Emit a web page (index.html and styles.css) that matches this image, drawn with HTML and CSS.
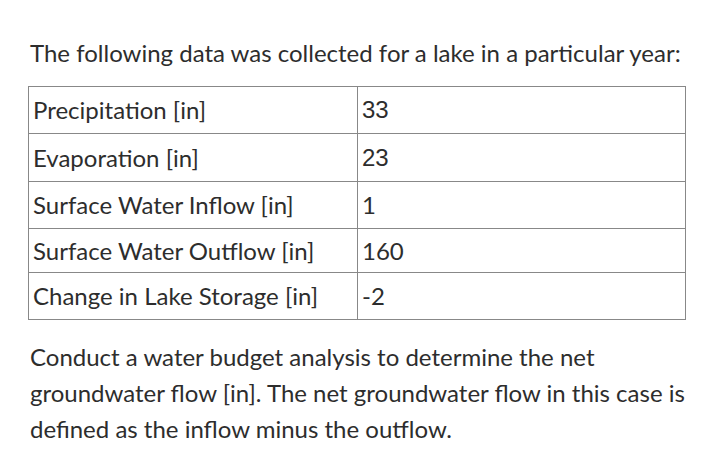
FILE: index.html
```html
<!DOCTYPE html>
<html>
<head>
<meta charset="utf-8">
<link rel="stylesheet" href="styles.css">
</head>
<body>
<div class="page">
  <p class="intro">The following data was collected for a lake in a particular year:</p>
  <table class="data">
    <tr class="r47"><td class="label">Precipitation [in]</td><td class="val arial">33</td></tr>
    <tr class="r48"><td class="label">Evaporation [in]</td><td class="val arial">23</td></tr>
    <tr class="r47"><td class="label">Surface Water Inflow [in]</td><td class="val">1</td></tr>
    <tr class="r44"><td class="label">Surface Water Outflow [in]</td><td class="val">160</td></tr>
    <tr class="r47"><td class="label">Change in Lake Storage [in]</td><td class="val">-2</td></tr>
  </table>
  <p class="question">Conduct a water budget analysis to determine the net groundwater flow [in]. The net groundwater flow in this case is defined as the inflow minus the outflow.</p>
</div>
</body>
</html>
```
FILE: styles.css
```css
html, body {
  margin: 0;
  padding: 0;
  background: #ffffff;
}
body {
  font-family: "Lato", "Liberation Sans", sans-serif;
  color: #2d2d2d;
}
.page {
  padding: 35px 26px 0 28px;
  width: 658px;
}
.intro {
  margin: 0 0 0 2px;
  font-size: 24px;
  line-height: 36px;
}
.data {
  margin-top: 15px;
  border-collapse: collapse;
  width: 658px;
}
.data td {
  border: 1px solid #888888;
  padding: 0 4px;
  font-size: 24px;
  line-height: 28px;
  vertical-align: middle;
  box-sizing: border-box;
}
.data tr.r47 td { height: 47px; }
.data tr.r48 td { height: 48px; }
.data tr.r44 td { height: 44px; }
.data td.label {
  width: 329px;
}
.data td.val.arial {
  font-family: "Liberation Sans", Arial, sans-serif;
  font-size: 24px;
}
.question {
  margin: 19px 0 0 2px;
  font-size: 24px;
  line-height: 36px;
  width: 662px;
}
```
